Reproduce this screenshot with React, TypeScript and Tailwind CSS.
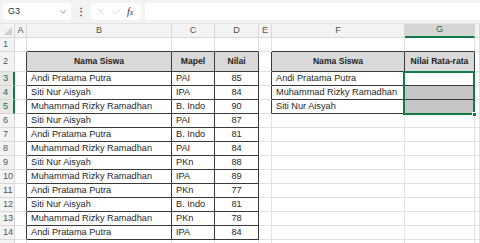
import { ChevronDown, X, Check } from "lucide-react";

const cols = ["A", "B", "C", "D", "E", "F", "G", ""];

const data = [
    ["Andi Pratama Putra", "PAI", "85"],
    ["Siti Nur Aisyah", "IPA", "84"],
    ["Muhammad Rizky Ramadhan", "B. Indo", "90"],
    ["Siti Nur Aisyah", "PAI", "87"],
    ["Andi Pratama Putra", "B. Indo", "81"],
    ["Muhammad Rizky Ramadhan", "PAI", "84"],
    ["Siti Nur Aisyah", "PKn", "88"],
    ["Muhammad Rizky Ramadhan", "IPA", "89"],
    ["Andi Pratama Putra", "PKn", "77"],
    ["Siti Nur Aisyah", "B. Indo", "81"],
    ["Muhammad Rizky Ramadhan", "PKn", "78"],
    ["Andi Pratama Putra", "IPA", "84"],
];

const rekap = ["Andi Pratama Putra", "Muhammad Rizky Ramadhan", "Siti Nur Aisyah"];

// returns text + style for a cell (row is excel row number, c is column index 0=A)
const getCell = (row: number, c: number) => {
    const inMain = row >= 2 && row <= 14 && c >= 1 && c <= 3;
    const inRekap = row >= 2 && row <= 5 && c >= 5 && c <= 6;
    const leftOfTable = (row >= 2 && row <= 14 && c === 0) || (row >= 2 && row <= 5 && c === 4);
    const aboveTable = row === 1 && ((c >= 1 && c <= 3) || (c >= 5 && c <= 6));

    let text = "";
    let align = "justify-start pl-[4px]";
    let bold = false;
    let fill = "bg-white";

    if (inMain) {
        if (row === 2) {
            text = ["Nama Siswa", "Mapel", "Nilai"][c - 1];
            bold = true;
            fill = "bg-[#d9d9d9]";
            align = "justify-center";
        } else {
            text = data[row - 3][c - 1];
            if (c === 3) align = "justify-center";
        }
    }
    if (inRekap) {
        if (row === 2) {
            text = c === 5 ? "Nama Siswa" : "Nilai Rata-rata";
            bold = true;
            fill = "bg-[#d9d9d9]";
            align = "justify-center";
        } else if (c === 5) {
            text = rekap[row - 3];
        } else if (row > 3) {
            fill = "bg-[#c6c6c6]";
        }
    }

    const r = inMain || inRekap || leftOfTable ? "border-r-[#3a3a3a]" : "border-r-[#e1e1e1]";
    const b = inMain || inRekap || aboveTable ? "border-b-[#3a3a3a]" : "border-b-[#e1e1e1]";
    return { text, align, bold, fill, r, b };
};

const App = () => {
    const rows = Array.from({ length: 15 }, (_, i) => i + 1);

    return (
        <div className="w-[480px] h-[243px] overflow-hidden bg-white font-['Liberation_Sans',sans-serif] text-[#1f1f1f]">
            {/* formula bar */}
            <div className="flex items-center h-[24px] bg-[#f3f3f3] pl-[3px] gap-[4px] border-b border-[#e3e3e3]">
                <div className="flex items-center justify-between w-[68px] h-[17px] bg-white rounded-[4px] pl-[5px] pr-[3px] text-[9px] text-[#333]">
                    <span>G3</span>
                    <ChevronDown size={10} strokeWidth={1.5} className="text-[#555]" />
                </div>
                <div className="w-[12px] text-center text-[10px] text-[#555] font-bold leading-none">⋮</div>
                <div className="flex items-center gap-[5px] w-[50px] h-[17px] bg-white rounded-[4px] px-[4px]">
                    <X size={11} strokeWidth={1} className="text-[#bbb]" />
                    <Check size={11} strokeWidth={1} className="text-[#bbb]" />
                    <span className="font-['Liberation_Serif',serif] italic text-[10px] text-[#333]">
                        f<span className="text-[8px]">x</span>
                    </span>
                </div>
                <div className="flex-1 h-[17px] bg-white rounded-l-[4px]" />
            </div>

            {/* sheet */}
            <div className="relative grid grid-cols-[15px_12px_145px_43px_44px_13px_133px_70px_1fr] grid-rows-[14px_14px_20px_repeat(13,14px)] text-[9.2px]">
                {/* corner */}
                <div className="relative bg-[#f3f3f3] border-r border-b border-[#d8d8d8]">
                    <div className="absolute right-[2px] bottom-[2px] w-0 h-0 border-l-[8px] border-l-transparent border-b-[8px] border-b-[#cfcfcf]" />
                </div>
                {cols.map((c, i) => (
                    <div
                        key={i}
                        className={
                            c === "G"
                                ? "flex items-center justify-center bg-[#d6d6d6] text-[#1e6b3c] border-r border-[#d8d8d8] border-b-2 border-b-[#107c41]"
                                : "flex items-center justify-center bg-[#f3f3f3] text-[#555] border-r border-b border-[#d8d8d8]"
                        }
                    >
                        {c}
                    </div>
                ))}

                {rows.map((row) => (
                    <div key={row} className="contents">
                        <div
                            className={
                                row >= 3 && row <= 5
                                    ? "flex items-center pl-[3px] bg-[#e6e6e6] text-[#1e6b3c] border-r-2 border-r-[#107c41] border-b border-b-[#d8d8d8]"
                                    : "flex items-center pl-[3px] bg-[#f3f3f3] text-[#555] border-r border-b border-[#d8d8d8]"
                            }
                        >
                            {row}
                        </div>
                        {cols.map((_, c) => {
                            const cell = getCell(row, c);
                            return (
                                <div
                                    key={c}
                                    className={`flex items-center whitespace-nowrap overflow-hidden border-r border-b ${cell.r} ${cell.b} ${cell.fill} ${cell.align} ${cell.bold ? "font-bold text-[8.6px]" : ""}`}
                                >
                                    {cell.text}
                                </div>
                            );
                        })}
                    </div>
                ))}

                {/* selection G3:G5 */}
                <div className="absolute left-[403px] top-[47px] w-[72px] h-[44px] border-2 border-[#107c41] pointer-events-none">
                    <div className="absolute -right-[4px] -bottom-[4px] w-[5px] h-[5px] bg-[#107c41] border border-white" />
                </div>
            </div>
        </div>
    );
};

export default App;
